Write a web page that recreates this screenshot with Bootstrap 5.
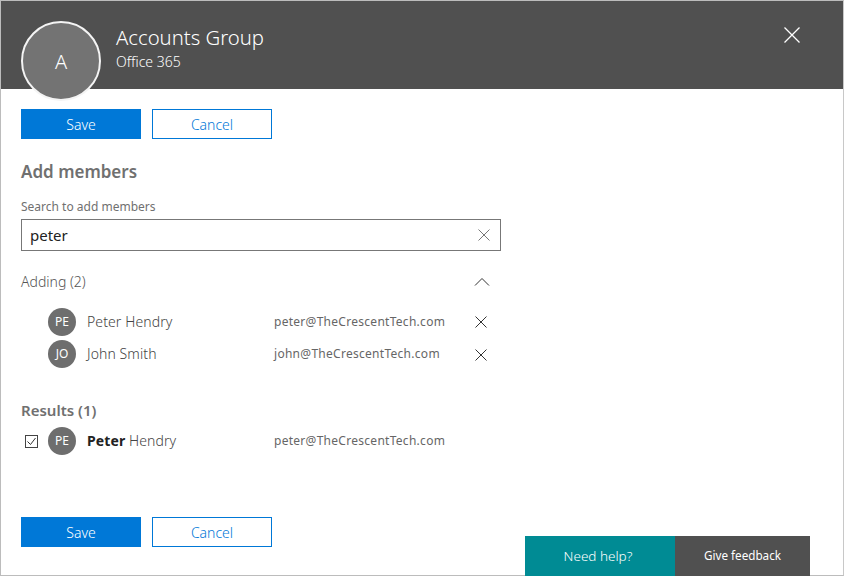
<!DOCTYPE html>
<html lang="en">
<head>
<meta charset="utf-8">
<title>Accounts Group</title>
<link rel="stylesheet" href="https://cdn.jsdelivr.net/npm/bootstrap@5.3.0/dist/css/bootstrap.min.css">
<style>
html,body{height:576px;overflow:hidden;background:#fff}
body{font-family:"Noto Sans","Open Sans","Liberation Sans",sans-serif;color:#333}
.frame{height:576px;border:1px solid #bcbcbc;border-right-color:#c8c8c8;position:relative}
.hdr{height:88px;background:#505050;color:#fff;position:relative;padding:22px 0 0 115px}
.hdr-av{position:absolute;left:20px;top:20px;width:80px;height:80px;border-radius:50%;background:#737373;border:2px solid #f4f4f4;color:#fff;font-size:20px;font-weight:300;display:flex;align-items:center;justify-content:center;padding-top:2px}
.hdr-title{font-size:20.300px;line-height:29px;font-weight:300}
.hdr-sub{font-size:14px;line-height:19px;font-weight:300}
.hdr-x{position:absolute;left:783px;top:26px;line-height:0}
.body-pad{padding:20px 0 0 20px}
.fbtn{width:120px;height:30px;border-radius:0;font-size:14px;font-weight:300;padding:0;line-height:30px;border:1px solid #0078d7}
.fbtn-save{background:#0078d7;color:#fff}
.fbtn-cancel{background:#fff;color:#0078d7}
.btn-pair{gap:11px}
.sect-h{font-size:17px;line-height:24px;font-weight:600;color:#707070;margin:21px 0 0}
.lbl{font-size:12px;line-height:16px;color:#707070;margin:15px 0 4px;display:block}
.srch{width:480px;height:32px;border:1px solid #777;padding:0 10px 0 8px;font-size:15px;color:#222}
.srch-val{flex:1}
.srch-x{margin-right:0}
.sub-h{width:480px;margin-top:20px;height:20px;font-size:14px;font-weight:300;color:#555}
.chev{margin-right:11px}
.p-row{width:480px;height:28px;font-weight:300}
.p-av{width:28px;height:28px;border-radius:50%;background:#6e6e6e;color:#fff;font-size:12px;font-weight:400;display:flex;align-items:center;justify-content:center;flex:none}
.p-name{width:187px;margin-left:11px;margin-top:-2px;font-size:14px;color:#444;letter-spacing:.1px}
.p-name b{font-weight:700;color:#222}
.p-mail{width:201px;font-size:12px;color:#666;letter-spacing:.28px;font-weight:400}
.p-ind{padding-left:27px}
.x-low{margin-top:2px}
.adding-list{margin-top:17px;display:flex;flex-direction:column;gap:4px}
.res-h{font-size:15px;line-height:20px;font-weight:600;color:#707070;margin-top:32px}
.chk{width:13px;height:13px;border:1px solid #444;margin:0 10px 0 4px;flex:none;line-height:0}
.res-row{margin-top:7px}
.foot{margin-top:62px;height:59px;justify-content:space-between;align-items:flex-start}
.help{margin-top:19px;margin-right:33px;height:40px}
.help-a,.help-b{height:40px;display:flex;align-items:center;justify-content:center;color:#fff;font-weight:300}
.help-a{width:150px;background:#008b94;font-size:13.500px;padding-right:4px}
.help-b{width:135px;background:#505050;font-size:11.700px;font-weight:400}
</style>
</head>
<body>
<div class="frame">
  <header class="hdr">
    <div class="hdr-av">A</div>
    <div class="hdr-title">Accounts Group</div>
    <div class="hdr-sub">Office 365</div>
    <div class="hdr-x"><svg width="16" height="16" viewBox="0 0 16 16"><path d="M.5.5l15 15M15.500.5l-15 15" stroke="#fff" stroke-width="1.300" fill="none"/></svg></div>
  </header>
  <main class="body-pad">
    <div class="d-flex btn-pair">
      <button type="button" class="btn fbtn fbtn-save">Save</button>
      <button type="button" class="btn fbtn fbtn-cancel">Cancel</button>
    </div>
    <h2 class="sect-h">Add members</h2>
    <label class="lbl">Search to add members</label>
    <div class="srch d-flex align-items-center">
      <span class="srch-val">peter</span>
      <svg class="srch-x" width="12" height="12" viewBox="0 0 12 12"><path d="M.5.500l11 11M11.500.500l-11 11" stroke="#777" fill="none"/></svg>
    </div>
    <div class="sub-h d-flex align-items-center justify-content-between">
      <span>Adding (2)</span>
      <svg class="chev" width="16" height="9" viewBox="0 0 16 9"><path d="M1 8.500l7-7 7 7" stroke="#333" fill="none"/></svg>
    </div>
    <div class="adding-list">
      <div class="p-row p-ind d-flex align-items-center">
        <div class="p-av">PE</div><div class="p-name">Peter Hendry</div><div class="p-mail">peter@TheCrescentTech.com</div>
        <svg width="12" height="12" viewBox="0 0 12 12"><path d="M.5.500l11 11M11.500.500l-11 11" stroke="#333" fill="none"/></svg>
      </div>
      <div class="p-row p-ind d-flex align-items-center">
        <div class="p-av">JO</div><div class="p-name">John Smith</div><div class="p-mail">john@TheCrescentTech.com</div>
        <svg class="x-low" width="12" height="12" viewBox="0 0 12 12"><path d="M.5.500l11 11M11.500.500l-11 11" stroke="#333" fill="none"/></svg>
      </div>
    </div>
    <div class="res-h">Results (1)</div>
    <div class="p-row res-row d-flex align-items-center">
      <div class="chk"><svg width="11" height="11" viewBox="0 0 11 11"><path d="M1.500 5.500l3 3 5-6.500" stroke="#333" fill="none"/></svg></div>
      <div class="p-av">PE</div><div class="p-name"><b>Peter</b> Hendry</div><div class="p-mail">peter@TheCrescentTech.com</div>
    </div>
    <div class="foot d-flex">
      <div class="d-flex btn-pair">
        <button type="button" class="btn fbtn fbtn-save">Save</button>
        <button type="button" class="btn fbtn fbtn-cancel">Cancel</button>
      </div>
      <div class="help d-flex">
        <div class="help-a">Need help?</div>
        <div class="help-b">Give feedback</div>
      </div>
    </div>
  </main>
</div>
<script src="https://cdn.jsdelivr.net/npm/bootstrap@5.3.0/dist/js/bootstrap.bundle.min.js"></script>
</body>
</html>
